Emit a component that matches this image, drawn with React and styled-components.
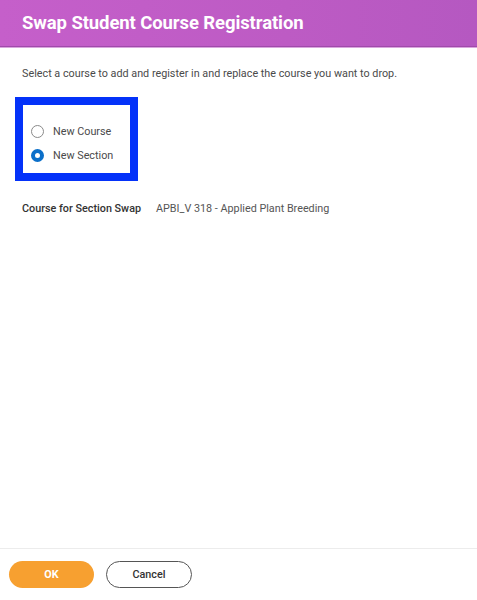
import React, { useState } from 'react';
import styled, { createGlobalStyle } from 'styled-components';

const GlobalStyle = createGlobalStyle`
    html, body {
        margin      : 0;
        padding     : 0;
        background  : #ffffff;
        font-family : Roboto, "Liberation Sans", Arial, sans-serif;
    }
`;

const Page = styled.div`
    width          : 477px;
    height         : 600px;
    display        : flex;
    flex-direction : column;
    background     : #fff;
`;

const Header = styled.header`
    height          : 46px;
    display         : flex;
    align-items     : center;
    padding         : 0 22px;
    background      : linear-gradient(90deg, #c55fca 0%, #bd5bc4 60%, #b558c1 100%);
    border-bottom   : 1px solid #a04aab;
    box-shadow      : 0 1px 0 #d9a6dd;
`;

const Title = styled.h1`
    margin         : 0;
    color          : #fff;
    font-size      : 18.5px;
    font-weight    : 700;
    letter-spacing : -0.1px;
`;

const Body = styled.main`
    flex           : 1;
    padding        : 19px 22px 0;
    display        : flex;
    flex-direction : column;
`;

const Intro = styled.p`
    margin      : 0;
    font-size   : 10.8px;
    color       : #4a4a4a;
    line-height : 16px;
`;

const Highlight = styled.div`
    margin-top     : 15px;
    margin-left    : -7px;
    width          : 123px;
    height         : 84px;
    border         : 8px solid #0432f9;
    padding        : 20px 0 0 8px;
    box-sizing     : border-box;
    display        : flex;
    flex-direction : column;
    gap            : 11px;
`;

const Option = styled.label`
    display     : flex;
    align-items : center;
    gap         : 9px;
    font-size   : 10.8px;
    color       : #4a4a4a;
    cursor      : pointer;
    height      : 13px;
`;

const Dot = styled.span`
    width         : 13px;
    height        : 13px;
    box-sizing    : border-box;
    border-radius : 50%;
    border        : ${p => p.$on ? '4px solid #0b6fc9' : '1px solid #8a8a8a'};
    background    : #fff;
    flex-shrink   : 0;
`;

const Field = styled.div`
    margin-top  : 21px;
    display     : flex;
    align-items : center;
    font-size   : 10.8px;
    line-height : 14px;
`;

const FieldLabel = styled.span`
    width       : 134px;
    color       : #333;
    font-weight : 500;
`;

const FieldValue = styled.span`
    color : #555;
`;

const Footer = styled.footer`
    height      : 51px;
    border-top  : 1px solid #ececec;
    display     : flex;
    align-items : center;
    gap         : 12px;
    padding     : 0 9px;
`;

const Button = styled.button`
    width         : ${p => p.$primary ? '85px' : '86px'};
    height        : 27px;
    border-radius : 14px;
    font-family   : inherit;
    font-size     : 10.8px;
    font-weight   : ${p => p.$primary ? 700 : 500};
    color         : ${p => p.$primary ? '#fff' : '#333'};
    background    : ${p => p.$primary ? '#f7a030' : '#fff'};
    border        : ${p => p.$primary ? 'none' : '1px solid #555'};
    cursor        : pointer;
`;

const options = ['New Course', 'New Section'];

export default function App() {
    const [choice, setChoice] = useState('New Section');

    return (
        <Page>
            <GlobalStyle />
            <Header>
                <Title>Swap Student Course Registration</Title>
            </Header>
            <Body>
                <Intro>Select a course to add and register in and replace the course you want to drop.</Intro>
                <Highlight>
                    {options.map(o => (
                        <Option key={o} onClick={() => setChoice(o)}>
                            <Dot $on={choice === o} />
                            {o}
                        </Option>
                    ))}
                </Highlight>
                <Field>
                    <FieldLabel>Course for Section Swap</FieldLabel>
                    <FieldValue>APBI_V 318 - Applied Plant Breeding</FieldValue>
                </Field>
            </Body>
            <Footer>
                <Button $primary>OK</Button>
                <Button>Cancel</Button>
            </Footer>
        </Page>
    );
}
